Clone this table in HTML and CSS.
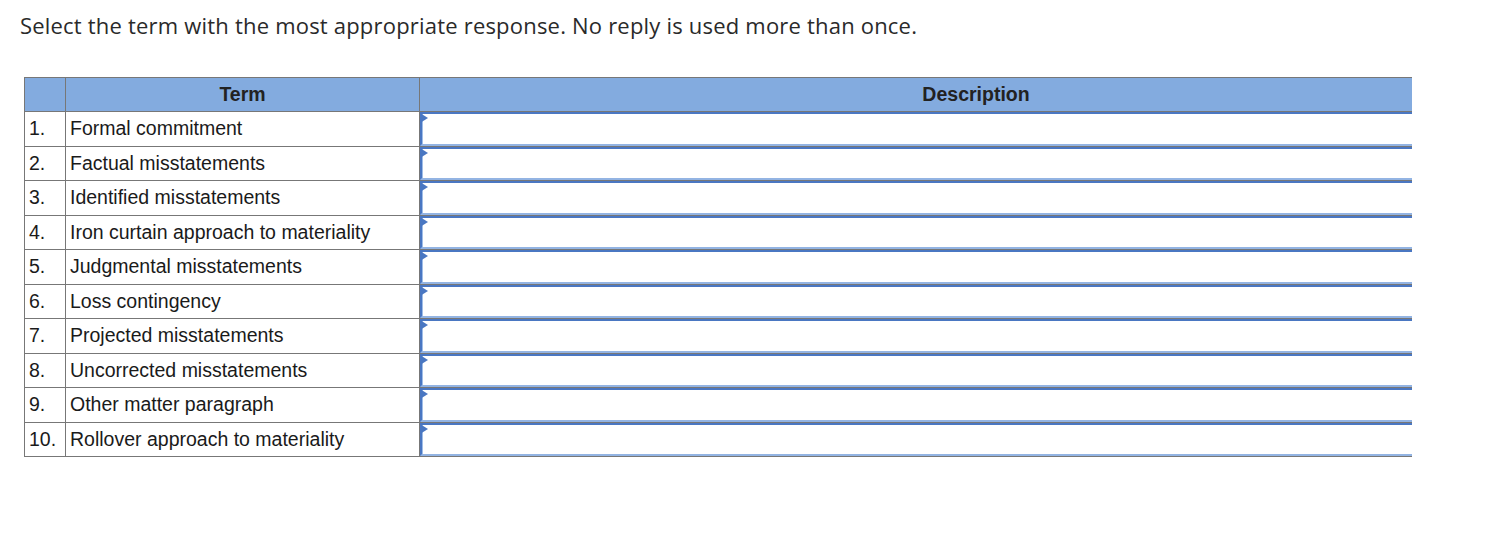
FILE: index.html
```html
<!DOCTYPE html>
<html>
<head>
<meta charset="utf-8">
<link rel="stylesheet" href="styles.css">
</head>
<body>
<div class="page">
  <p class="prompt">Select the term with the most appropriate response. No reply is used more than once.</p>
  <div class="grid">
    <div class="cell head num"></div>
    <div class="cell head term">Term</div>
    <div class="cell head hdesc">Description</div>

    <div class="cell num">1.</div><div class="cell term">Formal commitment</div><div class="cell desc"><div class="box"><span class="tri"></span></div></div>
    <div class="cell num">2.</div><div class="cell term">Factual misstatements</div><div class="cell desc"><div class="box"><span class="tri"></span></div></div>
    <div class="cell num">3.</div><div class="cell term">Identified misstatements</div><div class="cell desc"><div class="box"><span class="tri"></span></div></div>
    <div class="cell num">4.</div><div class="cell term">Iron curtain approach to materiality</div><div class="cell desc"><div class="box"><span class="tri"></span></div></div>
    <div class="cell num">5.</div><div class="cell term">Judgmental misstatements</div><div class="cell desc"><div class="box"><span class="tri"></span></div></div>
    <div class="cell num">6.</div><div class="cell term">Loss contingency</div><div class="cell desc"><div class="box"><span class="tri"></span></div></div>
    <div class="cell num">7.</div><div class="cell term">Projected misstatements</div><div class="cell desc"><div class="box"><span class="tri"></span></div></div>
    <div class="cell num">8.</div><div class="cell term">Uncorrected misstatements</div><div class="cell desc"><div class="box"><span class="tri"></span></div></div>
    <div class="cell num">9.</div><div class="cell term">Other matter paragraph</div><div class="cell desc"><div class="box"><span class="tri"></span></div></div>
    <div class="cell num">10.</div><div class="cell term">Rollover approach to materiality</div><div class="cell desc"><div class="box"><span class="tri"></span></div></div>
  </div>
</div>
</body>
</html>
```

FILE: styles.css
```css
* { box-sizing: border-box; }
html, body { margin: 0; padding: 0; background: #fff; }
.page { padding: 12px 0 0 20px; }
.prompt {
  margin: 0 0 39px 0;
  font-family: "Open Sans", Lato, sans-serif;
  font-size: 22px;
  letter-spacing: 0.2px;
  line-height: 26px;
  color: #2a2a2a;
}
.grid {
  margin-left: 4px;
  display: grid;
  grid-template-columns: 41px 354px 993px;
  grid-template-rows: 35px repeat(5, 35px 34px);
  font-family: "Liberation Sans", Arial, sans-serif;
  font-size: 19.5px;
  color: #1a1a1a;
}
.cell {
  border-bottom: 1px solid #777;
  display: flex;
  align-items: center;
  padding-bottom: 1px;
}
.num { border-left: 1px solid #777; padding-left: 4px; }
.term { border-left: 1px solid #777; padding-left: 4px; }
.desc { border-left: 1px solid #777; align-items: stretch; padding-bottom: 0; }
.hdesc { border-left: 1px solid #777; padding-left: 120px; }
.head {
  background: #83abdf;
  border-top: 1px solid #777;
  font-weight: bold;
  justify-content: center;
  color: #222;
}
.head.num { padding-left: 0; }
.head.term { padding-left: 0; }
.box {
  position: relative;
  flex: 1;
  border-top: 2px solid #4a77c2;
  border-left: 2px solid #4a77c2;
  border-bottom: 2px solid #93b4e3;
  box-shadow: inset 1px 0 0 #9fbde8;
  background: #fff;
}
.tri {
  position: absolute;
  left: -2px;
  top: -1px;
  width: 0;
  height: 0;
  border-top: 5.5px solid transparent;
  border-bottom: 5.5px solid transparent;
  border-left: 8px solid #4a77c2;
}
```
